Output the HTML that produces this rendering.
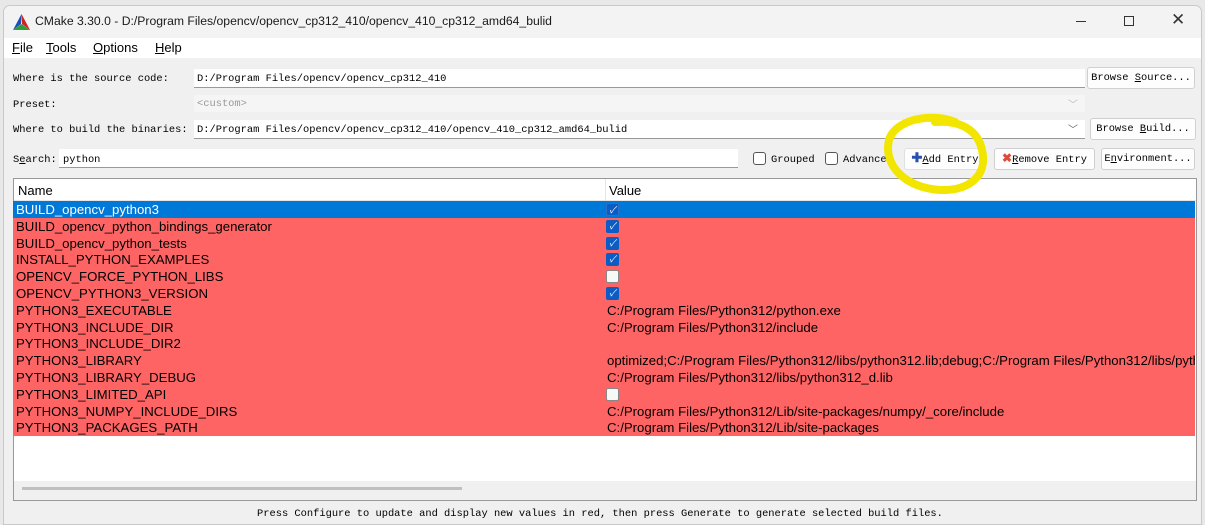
<!DOCTYPE html>
<html><head><meta charset="utf-8"><style>
*{margin:0;padding:0;box-sizing:border-box}
body{width:1205px;height:523px;overflow:hidden;background:#e8e8e8;position:relative;font-family:"Liberation Sans","Noto Sans CJK SC",sans-serif}
.a{position:absolute}
.win{left:3px;top:5px;width:1199px;height:520px;background:#f0f0f0;border:1px solid #c8c8c8;border-radius:7px 7px 0 0;overflow:hidden}
.title{left:0;top:0;width:100%;height:32px;background:#f3f3f3}
.menu{left:0;top:32px;width:100%;height:20px;background:#fff;font-size:13px}
.mono{font-family:"Liberation Mono",monospace;font-size:10.4px;color:#000;white-space:nowrap}
.inp{background:#fff;border-bottom:1px solid #999;height:19px}
.btn{background:#fdfdfd;border:1px solid #d0d0d0;border-radius:3px;height:22px;text-align:center;line-height:20px}
.cb{width:13px;height:13px;border:1px solid #555;border-radius:3px;background:#fff}
.row{left:13px;width:1182px;height:17px;background:#ff6464;font-size:13.2px;line-height:17px;white-space:nowrap;overflow:hidden}
.row span{position:absolute;left:3px}
.row b{font-weight:normal;position:absolute;left:594px}
.ck{position:absolute;left:593px;top:2px;width:13px;height:13px;background:#0b5cc4;border-radius:2px;color:#fff;font-size:9px;line-height:13px;text-align:center}
.uk{position:absolute;left:593px;top:2px;width:13px;height:13px;background:#f8f8f8;border:1px solid #888;border-radius:2px}
u{text-decoration:underline}
</style></head><body>
<div class="a win">
 <div class="a title">
  <svg class="a" style="left:9px;top:8px" width="17" height="16" viewBox="0 0 17 16"><polygon points="8.5,0 0,16 8,10" fill="#1a4fb5"/><polygon points="8.5,0 17,16 9,10" fill="#d42020"/><polygon points="0,16 17,16 8.5,10" fill="#2e9e3a"/></svg>
  <div class="a" style="left:31px;top:8px;font-size:12.2px;color:#1a1a1a">CMake 3.30.0 - D:/Program Files/opencv/opencv_cp312_410/opencv_410_cp312_amd64_bulid</div>
  <div class="a" style="left:1072px;top:15px;width:10px;height:1px;background:#333"></div>
  <div class="a" style="left:1120px;top:10px;width:10px;height:10px;border:1px solid #333"></div>
  <div class="a" style="left:1167px;top:4px;font-size:17px;color:#333">✕</div>
 </div>
 <div class="a menu">
  <span class="a" style="left:8px;top:2px"><u>F</u>ile</span>
  <span class="a" style="left:42px;top:2px"><u>T</u>ools</span>
  <span class="a" style="left:89px;top:2px"><u>O</u>ptions</span>
  <span class="a" style="left:151px;top:2px"><u>H</u>elp</span>
 </div>
 <div class="a mono" style="left:9px;top:67px">Where is the source code:</div>
 <div class="a inp" style="left:190px;top:63px;width:891px"></div>
 <div class="a mono" style="left:193px;top:67px">D:/Program Files/opencv/opencv_cp312_410</div>
 <div class="a btn mono" style="left:1083px;top:61px;width:108px">Browse <u>S</u>ource...</div>
 <div class="a mono" style="left:9px;top:93px">Preset:</div>
 <div class="a" style="left:190px;top:89px;width:891px;height:17px;background:#f5f5f5"></div>
 <div class="a mono" style="left:193px;top:92px;color:#999">&lt;custom&gt;</div>
 <div class="a" style="left:1064px;top:90px;color:#bbb;font-size:10px">﹀</div>
 <div class="a mono" style="left:9px;top:118px">Where to build the binaries:</div>
 <div class="a inp" style="left:190px;top:114px;width:891px"></div>
 <div class="a mono" style="left:193px;top:118px">D:/Program Files/opencv/opencv_cp312_410/opencv_410_cp312_amd64_bulid</div>
 <div class="a" style="left:1064px;top:115px;color:#666;font-size:10px">﹀</div>
 <div class="a btn mono" style="left:1086px;top:112px;width:106px">Browse <u>B</u>uild...</div>
 <div class="a mono" style="left:9px;top:148px">S<u>e</u>arch:</div>
 <div class="a inp" style="left:55px;top:143px;width:679px"></div>
 <div class="a mono" style="left:59px;top:148px">python</div>
 <div class="a cb" style="left:749px;top:146px"></div>
 <div class="a mono" style="left:767px;top:148px">Grouped</div>
 <div class="a cb" style="left:821px;top:146px"></div>
 <div class="a mono" style="left:839px;top:148px">Advanced</div>
 <div class="a btn mono" style="left:900px;top:142px;width:82px;border-color:#e0e0e0"><span style="color:#2a4fb0;font-size:13px;font-weight:bold">✚</span><u>A</u>dd Entry</div>
 <div class="a btn mono" style="left:990px;top:142px;width:101px"><span style="color:#e04a3a;font-size:12px;font-weight:bold">✖</span><u>R</u>emove Entry</div>
 <div class="a btn mono" style="left:1097px;top:142px;width:94px">E<u>n</u>vironment...</div>

 <div class="a" style="left:9px;top:172px;width:1184px;height:323px;background:#fff;border:1px solid #999"></div>
 <div class="a" style="left:10px;top:173px;width:1182px;height:22px;background:#fff;border-bottom:1px solid #e5e5e5;font-size:13px">
  <span class="a" style="left:4px;top:4px">Name</span>
  <div class="a" style="left:591px;top:0;width:1px;height:22px;background:#e5e5e5"></div>
  <span class="a" style="left:595px;top:4px">Value</span>
 </div>
 <div class="a" style="left:10px;top:475px;width:1182px;height:19px;background:#f0f0f0"></div>
 <div class="a" style="left:18px;top:481px;width:440px;height:3px;background:#c0c0c0"></div>
</div>
<div class="a row" style="top:201px;background:#0078d7;color:#fff"><span>BUILD_opencv_python3</span><i class="ck" style="border:1px solid #2c6fc9">✓</i></div>
<div class="a row" style="top:217.8px"><span>BUILD_opencv_python_bindings_generator</span><i class="ck">✓</i></div>
<div class="a row" style="top:234.6px"><span>BUILD_opencv_python_tests</span><i class="ck">✓</i></div>
<div class="a row" style="top:251.4px"><span>INSTALL_PYTHON_EXAMPLES</span><i class="ck">✓</i></div>
<div class="a row" style="top:268.2px"><span>OPENCV_FORCE_PYTHON_LIBS</span><i class="uk"></i></div>
<div class="a row" style="top:285px"><span>OPENCV_PYTHON3_VERSION</span><i class="ck">✓</i></div>
<div class="a row" style="top:301.8px"><span>PYTHON3_EXECUTABLE</span><b>C:/Program Files/Python312/python.exe</b></div>
<div class="a row" style="top:318.6px"><span>PYTHON3_INCLUDE_DIR</span><b>C:/Program Files/Python312/include</b></div>
<div class="a row" style="top:335.4px"><span>PYTHON3_INCLUDE_DIR2</span></div>
<div class="a row" style="top:352.2px"><span>PYTHON3_LIBRARY</span><b>optimized;C:/Program Files/Python312/libs/python312.lib;debug;C:/Program Files/Python312/libs/python312_d.lib</b></div>
<div class="a row" style="top:369px"><span>PYTHON3_LIBRARY_DEBUG</span><b>C:/Program Files/Python312/libs/python312_d.lib</b></div>
<div class="a row" style="top:385.8px"><span>PYTHON3_LIMITED_API</span><i class="uk"></i></div>
<div class="a row" style="top:402.6px"><span>PYTHON3_NUMPY_INCLUDE_DIRS</span><b>C:/Program Files/Python312/Lib/site-packages/numpy/_core/include</b></div>
<div class="a row" style="top:419.4px;height:16.6px"><span>PYTHON3_PACKAGES_PATH</span><b>C:/Program Files/Python312/Lib/site-packages</b></div>
<div class="a mono" style="left:257px;top:508px">Press Configure to update and display new values in red, then press Generate to generate selected build files.</div>
<svg class="a" style="left:0;top:0" width="1205" height="523"><path d="M955 122 C930 112 895 120 889 140 C883 165 905 188 940 190 C970 191 988 175 982 150 C978 130 960 120 935 122" fill="none" stroke="#f2e600" stroke-width="8" stroke-linecap="round"/></svg>
</body></html>
